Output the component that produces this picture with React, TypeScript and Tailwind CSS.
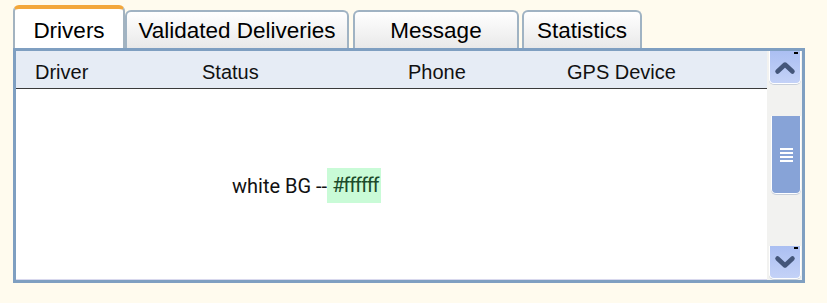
import React from "react";

function Chevron({ up }: { up: boolean }) {
  return (
    <svg width="22" height="15" viewBox="0 0 22 15">
      <polyline
        points={up ? "3.5,11.5 11,4.5 18.5,11.5" : "3.5,3.5 11,10.5 18.5,3.5"}
        fill="none"
        stroke="#44567a"
        strokeWidth="4.5"
        strokeLinecap="round"
        strokeLinejoin="round"
      />
    </svg>
  );
}

function ScrollBtn({ up }: { up: boolean }) {
  return (
    <div className="relative ml-[2px] w-[32px] h-[33px] rounded-b-[5px] border-x border-b border-white bg-gradient-to-b from-[#abbff2] to-[#c4d2f7] shadow-[0_1px_0_#c9d0da] flex items-center justify-center">
      <div className="absolute right-[2px] top-[1px] w-[4px] h-[2px] bg-black" />
      <Chevron up={up} />
    </div>
  );
}

export default function App() {
  const font = { fontFamily: '"Liberation Sans", Arial, sans-serif' };
  return (
    <div className="w-[827px] h-[303px] bg-[#fffbee] pt-[5px] pl-[13px]" style={font}>
      <div className="flex items-end h-[43px]">
        <div className="w-[112px] h-[43px] rounded-t-[6px] border-t-[4px] border-t-[#f3a73c] border-x-2 border-x-[#a3b3c0] bg-white flex items-center justify-center text-[22.5px] text-black pt-[4px]">
          Drivers
        </div>
        <div className="w-[224px] h-[38px] rounded-t-[6px] border-2 border-b-0 border-[#a0b3c3] bg-gradient-to-b from-white to-[#e9e9e9] flex items-center justify-center text-[22.5px] text-black pt-[2px]">
          Validated Deliveries
        </div>
        <div className="ml-[4px] w-[166px] h-[38px] rounded-t-[6px] border-2 border-b-0 border-[#a0b3c3] bg-gradient-to-b from-white to-[#e9e9e9] flex items-center justify-center text-[22.5px] text-black pt-[2px]">
          Message
        </div>
        <div className="ml-[3px] w-[120px] h-[38px] rounded-t-[6px] border-2 border-b-0 border-[#a0b3c3] bg-gradient-to-b from-white to-[#e9e9e9] flex items-center justify-center text-[22.5px] text-black pt-[2px]">
          Statistics
        </div>
      </div>
      <div className="w-[792px] h-[235px] border-[3px] border-[#7f9fc1] flex">
        <div className="flex-1 flex flex-col border-b border-[#d9d9ee]">
          <div className="h-[38px] bg-[#e6ecf5] border-b border-[#3a3a3a] flex items-center pl-[19px] pt-[5px] text-[20px] text-[#111]">
            <div className="w-[167px]">Driver</div>
            <div className="w-[206px]">Status</div>
            <div className="w-[159px]">Phone</div>
            <div>GPS Device</div>
          </div>
          <div className="flex-1 bg-white pl-[216px] pt-[79px]">
            <div className="flex items-center text-[20px] text-[#111]" style={{ fontFamily: 'Roboto, sans-serif' }}>
              <span>white BG --</span>
              <span className="h-[35px] leading-[35px] pl-[5px] pr-[3px] tracking-[-1.1px] bg-[#c9fbd7] text-[#1c4a2a]">#ffffff</span>
            </div>
          </div>
        </div>
        <div className="w-[35px] bg-[#f2f2f0] flex flex-col">
          <ScrollBtn up />
          <div className="mt-[32px] ml-[4px] w-[30px] h-[78px] rounded-b-[5px] border-x border-b border-white bg-[#87a3d7] shadow-[0_1px_0_#c9d0da] flex flex-col items-center justify-center gap-[2px]">
            <div className="w-[13px] h-[2px] bg-white" />
            <div className="w-[13px] h-[2px] bg-white" />
            <div className="w-[13px] h-[2px] bg-white" />
            <div className="w-[13px] h-[2px] bg-white" />
          </div>
          <div className="flex-1" />
          <div className="mb-[1px]">
            <ScrollBtn up={false} />
          </div>
        </div>
      </div>
    </div>
  );
}
